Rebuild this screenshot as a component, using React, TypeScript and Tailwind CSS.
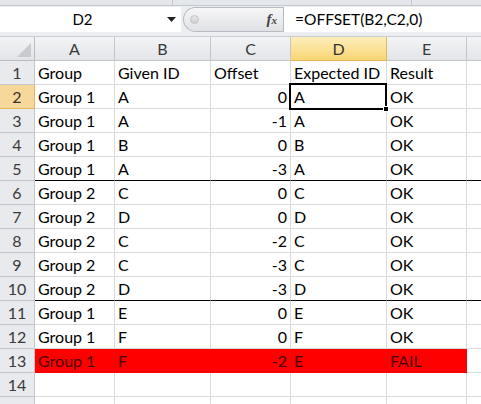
import React from 'react';

type Cell = string | number;

const rows: Cell[][] = [
  ['Group', 'Given ID', 'Offset', 'Expected ID', 'Result'],
  ['Group 1', 'A', 0, 'A', 'OK'],
  ['Group 1', 'A', -1, 'A', 'OK'],
  ['Group 1', 'B', 0, 'B', 'OK'],
  ['Group 1', 'A', -3, 'A', 'OK'],
  ['Group 2', 'C', 0, 'C', 'OK'],
  ['Group 2', 'D', 0, 'D', 'OK'],
  ['Group 2', 'C', -2, 'C', 'OK'],
  ['Group 2', 'C', -3, 'C', 'OK'],
  ['Group 2', 'D', -3, 'D', 'OK'],
  ['Group 1', 'E', 0, 'E', 'OK'],
  ['Group 1', 'F', 0, 'F', 'OK'],
  ['Group 1', 'F', -2, 'E', 'FAIL'],
  ['', '', '', '', ''],
  ['', '', '', '', ''],
];

const colWidths = ['w-[80px]', 'w-[96px]', 'w-[80px]', 'w-[96px]', 'w-[80px]'];
const letters = ['A', 'B', 'C', 'D', 'E'];

function FormulaBar() {
  return (
    <div className="flex h-[37px] flex-col">
      <div className="flex h-[6px] border-b border-[#c4c8ce] bg-[#e4e7eb]">
        <div className="w-[173px] border-r border-[#c4c8ce]" />
        <div className="w-[239px] border-r border-[#c4c8ce]" />
        <div className="flex-1" />
      </div>
      <div className="flex h-[31px] items-start border-b border-[#c9cdd2] bg-[#eceef1] pt-[1px]">
        <div className="relative flex h-[25px] w-[181px] items-center justify-center bg-white text-[15px] text-black">
          <span className="-ml-[16px]">D2</span>
          <svg className="absolute left-[167px] top-[10px]" width="9" height="5" viewBox="0 0 9 5">
            <polygon points="0,0 9,0 4.5,5" fill="#222" />
          </svg>
        </div>
        <div className="ml-[2px] flex h-[25px] w-[100px] items-center rounded-l-[13px] border border-r-0 border-[#b7bbc1] bg-gradient-to-b from-[#f7f7f8] to-[#dfe1e4]">
          <div className="ml-[6px] h-[9px] w-[9px] rounded-full border border-[#c2c2c2] bg-gradient-to-b from-[#e6e6e6] to-[#cfcfcf]" />
          <span className="ml-auto mr-[6px] font-['Liberation_Serif',serif] text-[15px] font-bold italic text-[#444]">
            f<span className="text-[11px]">x</span>
          </span>
        </div>
        <div className="flex h-[25px] flex-1 items-center border-l border-[#b7bbc1] bg-white pl-[11px] text-[15.5px] text-black">
          =OFFSET(B2,C2,0)
        </div>
      </div>
    </div>
  );
}

export default function App() {
  return (
    <div className="h-[404px] w-[481px] overflow-hidden bg-white font-['Lato',sans-serif]">
      <FormulaBar />
      <div className="relative">
        {/* column headers */}
        <div className="flex h-[24px]">
          <div className="relative w-[35px] border-r border-b border-[#b9bdc3] bg-gradient-to-b from-[#f2f3f5] to-[#e2e4e7]">
            <svg className="absolute bottom-[3px] right-[3px]" width="14" height="14" viewBox="0 0 14 14">
              <polygon points="14,0 14,14 0,14" fill="#c8cacd" />
            </svg>
          </div>
          {letters.map((l, i) => (
            <div
              key={l}
              className={`${colWidths[i]} flex items-center justify-center border-r border-b text-[16px] ${
                l === 'D'
                  ? 'border-[#e3b55a] bg-gradient-to-b from-[#fdeebb] to-[#f9d672] text-[#333]'
                  : 'border-[#c3c6cb] bg-gradient-to-b from-[#f3f4f6] to-[#e3e5e8] text-[#3a3a3a]'
              }`}
            >
              {l}
            </div>
          ))}
          <div className="flex-1 border-b border-[#c3c6cb] bg-gradient-to-b from-[#f3f4f6] to-[#e3e5e8]" />
        </div>

        {rows.map((row, r) => {
          const n = r + 1;
          const fail = n === 13;
          const thick = n === 5 || n === 10;
          return (
            <div key={n} className="flex h-[24px]">
              <div
                className={`flex w-[35px] items-center justify-center border-r border-b text-[16px] ${
                  n === 2
                    ? 'border-[#e3b55a] bg-[#f8d89a] text-[#333]'
                    : 'border-[#c3c6cb] bg-[#e8eaed] text-[#3a3a3a]'
                }`}
              >
                {n < 15 ? n : ''}
              </div>
              {row.map((v, c) => {
                const num = typeof v === 'number';
                return (
                  <div
                    key={c}
                    className={`${colWidths[c]} flex items-center overflow-visible whitespace-nowrap border-r border-b px-[3px] text-[16px] ${
                      num ? 'justify-end' : 'justify-start'
                    } ${
                      fail
                        ? 'border-[#ff0000] bg-[#ff0000] text-[#4a0000]'
                        : thick
                          ? 'border-r-[#d9d9d9] border-b-black text-black'
                          : 'border-[#d9d9d9] text-black'
                    }`}
                  >
                    {v}
                  </div>
                );
              })}
              <div className={`flex-1 border-b ${thick ? 'border-black' : 'border-[#d9d9d9]'}`} />
            </div>
          );
        })}

        {/* active cell D2 */}
        <div className="absolute left-[289px] top-[46px] h-[27px] w-[98px] border-2 border-black" />
        <div className="absolute left-[383px] top-[69px] h-[6px] w-[6px] border border-white bg-black" />
      </div>
    </div>
  );
}
